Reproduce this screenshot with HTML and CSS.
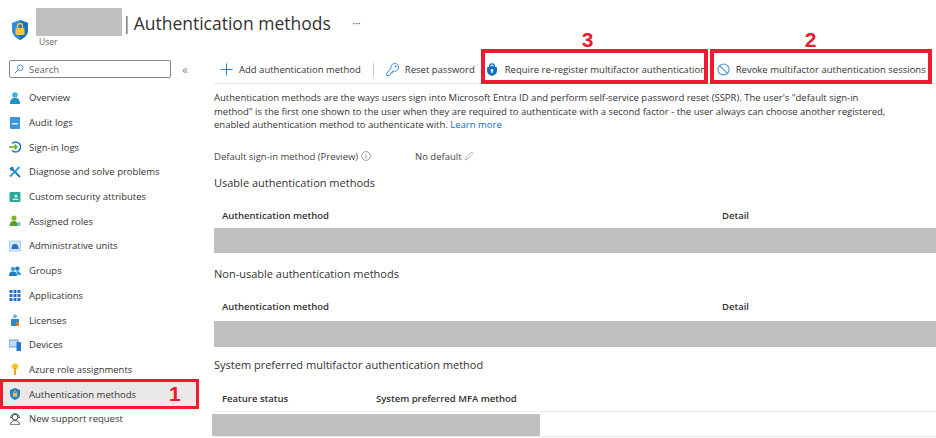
FILE: index.html
```html
<!DOCTYPE html>
<html lang="en">
<head>
    <meta charset="UTF-8">
    <meta name="viewport" content="width=device-width, initial-scale=1.0">
    <title>Authentication methods</title>
    <link rel="stylesheet" href="styles.css">
</head>
<body>
    <header class="page-head">
        <svg class="head-icon" viewBox="0 0 18 20"><path d="M9 0 L17 3 V10 C17 15 13 18 9 20 C5 18 1 15 1 10 V3 Z" fill="#2a8ae6"/><path d="M9 0 L17 3 V10 C17 15 13 18 9 20 Z" fill="#1570c8"/><rect x="4.5" y="8" width="9" height="7" rx="1" fill="#f5c431"/><path d="M6.5 8 V6 a2.5 2.5 0 0 1 5 0 V8" fill="none" stroke="#f5c431" stroke-width="1.4"/></svg>
        <div class="head-name">
            <div class="redacted-name"></div>
            <div class="head-sub">User</div>
        </div>
        <h1 class="head-title"><span class="head-pipe">|</span>Authentication methods</h1>
        <span class="head-more">···</span>
    </header>

    <div class="layout">
        <aside class="sidebar">
            <div class="search-row">
                <div class="search-box">
                    <svg class="search-icon" viewBox="0 0 12 12"><circle cx="7.5" cy="4.5" r="3.4" fill="none" stroke="#3a7fc4"/><path d="M5 7 L1 11" stroke="#3a7fc4" stroke-width="1.2"/></svg>
                    <span>Search</span>
                </div>
                <span class="collapse">«</span>
            </div>
            <nav class="nav">
                <a class="nav-item"><svg class="nav-icon" viewBox="0 0 12 12"><circle cx="6" cy="3" r="2.8" fill="#36b4d9"/><path d="M1 12 C1 7 3 6 6 6 C9 6 11 7 11 12 Z" fill="#1b93c9"/></svg>Overview</a>
                <a class="nav-item"><svg class="nav-icon" viewBox="0 0 12 12"><rect x="1" y="0" width="10" height="12" rx="1" fill="#3f96e0"/><rect x="3" y="6" width="6" height="1.5" fill="#d7ecfb"/></svg>Audit logs</a>
                <a class="nav-item"><svg class="nav-icon" viewBox="0 0 12 12"><path d="M3 2.5 A5 5 0 1 1 3 9.5" fill="none" stroke="#1b74c4" stroke-width="1.6"/><path d="M0 6 H8 M5.5 3.5 L8 6 L5.5 8.5" fill="none" stroke="#68ad1c" stroke-width="1.4"/></svg>Sign-in logs</a>
                <a class="nav-item"><svg class="nav-icon" viewBox="0 0 12 12"><path d="M3 3 L11 11" stroke="#1b74c4" stroke-width="1.8"/><path d="M0.5 2.5 L2.5 0.5 L4.5 1.5 L4.5 4.5 L1.5 4.5 Z" fill="#1b74c4"/><path d="M10.5 1 L1 10.5" stroke="#2aa0d8" stroke-width="2"/></svg>Diagnose and solve problems</a>
                <a class="nav-item"><svg class="nav-icon" viewBox="0 0 12 12"><rect x="0.5" y="1" width="11" height="10" rx="1" fill="#2fa898"/><circle cx="7" cy="5" r="1.6" fill="#c8ecec"/><path d="M3 9 C4 7 9 7 10 9 Z" fill="#c8ecec"/></svg>Custom security attributes</a>
                <a class="nav-item"><svg class="nav-icon" viewBox="0 0 12 12"><circle cx="5" cy="3" r="2.6" fill="#7ab52d"/><path d="M0.5 11 C0.5 7 3 6 5 6 C7 6 8.5 7 9 11 Z" fill="#5e9a22"/><circle cx="9.8" cy="9" r="2" fill="#6cc5e8"/></svg>Assigned roles</a>
                <a class="nav-item"><svg class="nav-icon" viewBox="0 0 12 12"><rect x="0.5" y="1" width="11" height="10" fill="#d3e7f8" stroke="#8fbfe8" stroke-width="0.7"/><path d="M2.5 9 C2.5 5 4 4 6 4 C8 4 9.5 5 9.5 9 Z" fill="#2e6fc0"/></svg>Administrative units</a>
                <a class="nav-item"><svg class="nav-icon" viewBox="0 0 12 12"><circle cx="4" cy="4" r="2.2" fill="#36a3dc"/><circle cx="8.4" cy="3.6" r="2.2" fill="#1b7cc8"/><path d="M0 11 C0 7 2 6.5 4 6.5 C6 6.5 7.5 7 8 11 Z" fill="#1b7cc8"/><path d="M7 6.5 C10 5.5 12 7 12 10 H8.4 Z" fill="#36a3dc"/></svg>Groups</a>
                <a class="nav-item"><svg class="nav-icon" viewBox="0 0 12 12"><path d="M0.5 1 H3.5 V4 H0.5 Z M4.5 1 H7.5 V4 H4.5 Z M8.5 1 H11.5 V4 H8.5 Z M0.5 5 H3.5 V8 H0.5 Z M4.5 5 H7.5 V8 H4.5 Z M8.5 5 H11.5 V8 H8.5 Z M0.5 9 H3.5 V12 H0.5 Z M4.5 9 H7.5 V12 H4.5 Z M8.5 9 H11.5 V12 H8.5 Z" fill="#2272c9"/></svg>Applications</a>
                <a class="nav-item"><svg class="nav-icon" viewBox="0 0 12 12"><circle cx="6" cy="2.2" r="2" fill="#6db6e0"/><rect x="2" y="5" width="8" height="7" fill="#2f87c6"/><rect x="7" y="8" width="3" height="4" fill="#d9772b"/></svg>Licenses</a>
                <a class="nav-item"><svg class="nav-icon" viewBox="0 0 12 12"><rect x="0" y="1" width="9" height="7" fill="#bfdcf3" stroke="#3f8fd6" stroke-width="0.8"/><rect x="7.5" y="3" width="4.5" height="9" rx="0.6" fill="#1f77d0"/></svg>Devices</a>
                <a class="nav-item"><svg class="nav-icon" viewBox="0 0 12 12"><circle cx="6" cy="3.4" r="3" fill="#f7c325"/><rect x="5" y="5" width="2" height="7" fill="#e8ac12"/></svg>Azure role assignments</a>
                <a class="nav-item is-active"><svg class="nav-icon" viewBox="0 0 12 12"><path d="M6 0 L11 2 V6.5 C11 9.5 8.5 11 6 12 C3.5 11 1 9.5 1 6.5 V2 Z" fill="#1e7fd8"/><rect x="3.8" y="5" width="4.4" height="3.6" fill="#f5c431"/><path d="M4.8 5 V4 a1.2 1.2 0 0 1 2.4 0 V5" fill="none" stroke="#f5c431" stroke-width="0.8"/></svg>Authentication methods<span class="mark mark-side">1</span></a>
                <a class="nav-item"><svg class="nav-icon" viewBox="0 0 12 12"><circle cx="6" cy="4.2" r="2.8" fill="none" stroke="#444" stroke-width="0.9"/><path d="M1.6 5 A4.4 4.4 0 0 1 10.4 5 M1.2 4.6 H3.2 M8.8 4.6 H10.8 M1.5 11.8 C1.5 8.8 3.5 7.6 6 7.6 C8.5 7.6 10.5 8.8 10.5 11.8 Z" fill="none" stroke="#444" stroke-width="0.9"/></svg>New support request</a>
            </nav>
        </aside>

        <main class="content">
            <div class="toolbar">
                <button class="tool tool-add"><svg class="tool-icon" viewBox="0 0 13 13"><path d="M6.5 0.5 V12.5 M0.5 6.5 H12.5" stroke="#2f7fc8" stroke-width="1"/></svg>Add authentication method</button>
                <span class="tool-sep"></span>
                <button class="tool tool-reset"><svg class="tool-icon" viewBox="0 0 13 13"><path d="M5 5.2 A3.9 3.9 0 1 1 8 8.2 L6.4 8.2 L6.4 9.8 L4.8 9.8 L4.8 11.4 L3.2 12.5 L0.8 12.5 L0.8 10 Z" fill="none" stroke="#2f7fc8" stroke-width="0.9" stroke-linejoin="round"/><circle cx="9.6" cy="3.4" r="0.9" fill="#2f7fc8"/></svg>Reset password</button>
                <button class="tool tool-mark tool-require"><svg class="lock-icon" viewBox="0 0 10 13"><path d="M2.6 5 V3.2 a2.4 2.4 0 0 1 4.8 0 V5" fill="none" stroke="#1170c4" stroke-width="1.3"/><path d="M5 2.8 L10 4.6 V8 C10 10.6 7.4 12.2 5 13 C2.6 12.2 0 10.6 0 8 V4.6 Z" fill="#1170c4"/><circle cx="5" cy="7.4" r="1.3" fill="#fff"/><rect x="4.4" y="7.6" width="1.2" height="2.6" fill="#fff"/></svg>Require re-register multifactor authentication<span class="mark mark-three">3</span></button>
                <button class="tool tool-mark tool-revoke"><svg class="tool-icon" viewBox="0 0 14 14"><circle cx="7" cy="7" r="6" fill="none" stroke="#3c8fd6" stroke-width="1.1"/><path d="M2.8 2.8 L11.2 11.2" stroke="#3c8fd6" stroke-width="1.1"/></svg>Revoke multifactor authentication sessions<span class="mark mark-two">2</span></button>
            </div>

            <p class="intro">Authentication methods are the ways users sign into Microsoft Entra ID and perform self-service password reset (SSPR). The user's "default sign-in method" is the first one shown to the user when they are required to authenticate with a second factor - the user always can choose another registered, enabled authentication method to authenticate with. <a class="link">Learn more</a></p>

            <div class="default-row">
                <span class="default-label">Default sign-in method (Preview) <svg class="info-icon" viewBox="0 0 10 10"><circle cx="5" cy="5" r="4.4" fill="none" stroke="#777" stroke-width="0.7"/><path d="M5 4.2 V7.4 M5 2.6 V3.4" stroke="#777" stroke-width="0.8"/></svg></span>
                <span>No default <svg class="edit-icon" viewBox="0 0 10 10"><path d="M1 9 L2 6.5 L7.5 1 L9 2.5 L3.5 8 Z" fill="none" stroke="#999" stroke-width="0.7"/></svg></span>
            </div>

            <h2 class="section-title section-usable">Usable authentication methods</h2>
            <div class="table-head cols-method"><span>Authentication method</span><span>Detail</span></div>
            <div class="redacted-row row-usable"></div>

            <h2 class="section-title section-non">Non-usable authentication methods</h2>
            <div class="table-head cols-method"><span>Authentication method</span><span>Detail</span></div>
            <div class="redacted-row row-non"></div>

            <h2 class="section-title section-system">System preferred multifactor authentication method</h2>
            <div class="table-head cols-feature"><span>Feature status</span><span>System preferred MFA method</span></div>
            <div class="feature-row"><div class="redacted-short"></div></div>
        </main>
    </div>
</body>
</html>
```

FILE: styles.css
```css
html, body {
    margin: 0;
    height: 438px;
    overflow: hidden;
}

body {
    background: #fff;
    font-family: "Open Sans", "Liberation Sans", sans-serif;
    font-size: 9.5px;
    color: #333;
}

/* Page header */
.page-head {
    display: flex;
    align-items: flex-start;
    height: 49px;
    padding: 8px 0 0 11px;
    box-sizing: border-box;
}

.head-icon {
    width: 18px;
    height: 20px;
    margin-top: 12px;
    margin-right: 7px;
}

.redacted-name {
    width: 86px;
    height: 28px;
    background: #c0c0c0;
}

.head-sub {
    font-size: 8.5px;
    color: #666;
    margin: 0 0 0 3px;
}

.head-title {
    margin: 1px 0 0;
    font-size: 17.5px;
    font-weight: 400;
    line-height: 28px;
    color: #333;
    white-space: nowrap;
}

.head-pipe {
    margin-right: 2px;
    color: #6b5a45;
}

.head-more {
    margin: 8px 0 0 22px;
    font-size: 10px;
    color: #444;
}

/* Layout */
.layout {
    display: flex;
}

.sidebar {
    width: 214px;
    flex: none;
}

.content {
    flex: 1;
    min-width: 0;
}

/* Sidebar */
.search-row {
    display: flex;
    align-items: center;
    padding: 11px 0 0 9px;
}

.search-box {
    display: flex;
    align-items: center;
    gap: 5px;
    width: 162px;
    height: 18px;
    box-sizing: border-box;
    padding-left: 4px;
    border: 1px solid #8a8886;
    border-radius: 2px;
    color: #666;
}

.search-icon {
    width: 10px;
    height: 10px;
}

.collapse {
    margin-left: 11px;
    font-size: 12px;
    color: #888;
}

.nav {
    margin-top: 7.5px;
}

.nav-item {
    display: flex;
    align-items: center;
    height: 24.7px;
    padding-left: 9px;
    color: #333;
    white-space: nowrap;
    position: relative;
}

.nav-icon {
    width: 12px;
    height: 12px;
    margin-right: 8px;
    flex: none;
}

.is-active {
    background: #ebe9e8;
    width: 193px;
    margin-left: 3px;
    padding-left: 6px;
    box-sizing: border-box;
    outline: 3px solid #ee1c2e;
}

/* Numbers drawn on the screenshot */
.mark {
    position: absolute;
    color: #e81c2e;
    font-family: "Liberation Sans", sans-serif;
    font-size: 21px;
    font-weight: 700;
    line-height: 20px;
}

.mark-side {
    left: 166px;
    top: 2px;
}

.mark-three {
    top: -19px;
    left: 101px;
}

.mark-two {
    top: -19px;
    left: 95px;
}

/* Toolbar */
.toolbar {
    display: flex;
    height: 35px;
    position: relative;
    border-bottom: 1px solid #edebe9;
    box-sizing: border-box;
}

.tool {
    display: flex;
    align-items: center;
    height: 35px;
    box-sizing: border-box;
    padding: 6px 0 0;
    border: none;
    background: none;
    font: inherit;
    color: #333;
    white-space: nowrap;
    position: relative;
}

.tool-icon {
    width: 13px;
    height: 13px;
    margin-right: 6px;
    flex: none;
}

.lock-icon {
    width: 10px;
    height: 13px;
    margin-right: 8px;
    flex: none;
}

.tool-add {
    padding-left: 6px;
}

.tool-sep {
    width: 1px;
    height: 14px;
    margin: 14px 12px 0;
    background: #c8c6c4;
}

.tool-mark {
    outline: 4px solid #ee1c2e;
    outline-offset: -4px;
}

.tool-require {
    width: 227px;
    margin-left: 6px;
    padding-left: 6px;
}

.tool-revoke {
    width: 222px;
    margin-left: 2px;
    padding-left: 7px;
}

/* Body text */
.intro {
    margin: 7px 0 0;
    padding-right: 42px;
    line-height: 13.5px;
    color: #333;
}

.link {
    color: #0f6cbd;
}

.default-row {
    display: flex;
    margin-top: 18px;
    color: #444;
}

.default-label {
    width: 201px;
}

.info-icon, .edit-icon {
    width: 10px;
    height: 10px;
    vertical-align: -1px;
}

.section-title {
    margin: 0;
    font-size: 11px;
    font-weight: 400;
    color: #333;
    line-height: 15px;
}

.section-usable {
    margin-top: 12px;
}

.section-non {
    margin-top: 13px;
}

.section-system {
    margin-top: 10px;
}

/* Tables */
.table-head {
    display: grid;
    align-items: center;
    height: 13px;
    margin-top: 19px;
    padding-left: 8px;
    font-weight: 600;
    color: #333;
}

.cols-method {
    grid-template-columns: 500px 1fr;
}

.cols-feature {
    grid-template-columns: 154px 1fr;
    margin-top: 20px;
}

.redacted-row {
    background: #c0c0c0;
}

.row-usable {
    height: 25px;
    margin-top: 6px;
}

.row-non {
    height: 26px;
    margin-top: 8px;
}

.feature-row {
    height: 26px;
    margin-top: 6px;
    padding-top: 2px;
    box-sizing: border-box;
    border-top: 1px solid #edebe9;
    border-bottom: 1px solid #edebe9;
}

.redacted-short {
    width: 328px;
    height: 22px;
    margin-left: -2px;
    background: #c0c0c0;
}
```
